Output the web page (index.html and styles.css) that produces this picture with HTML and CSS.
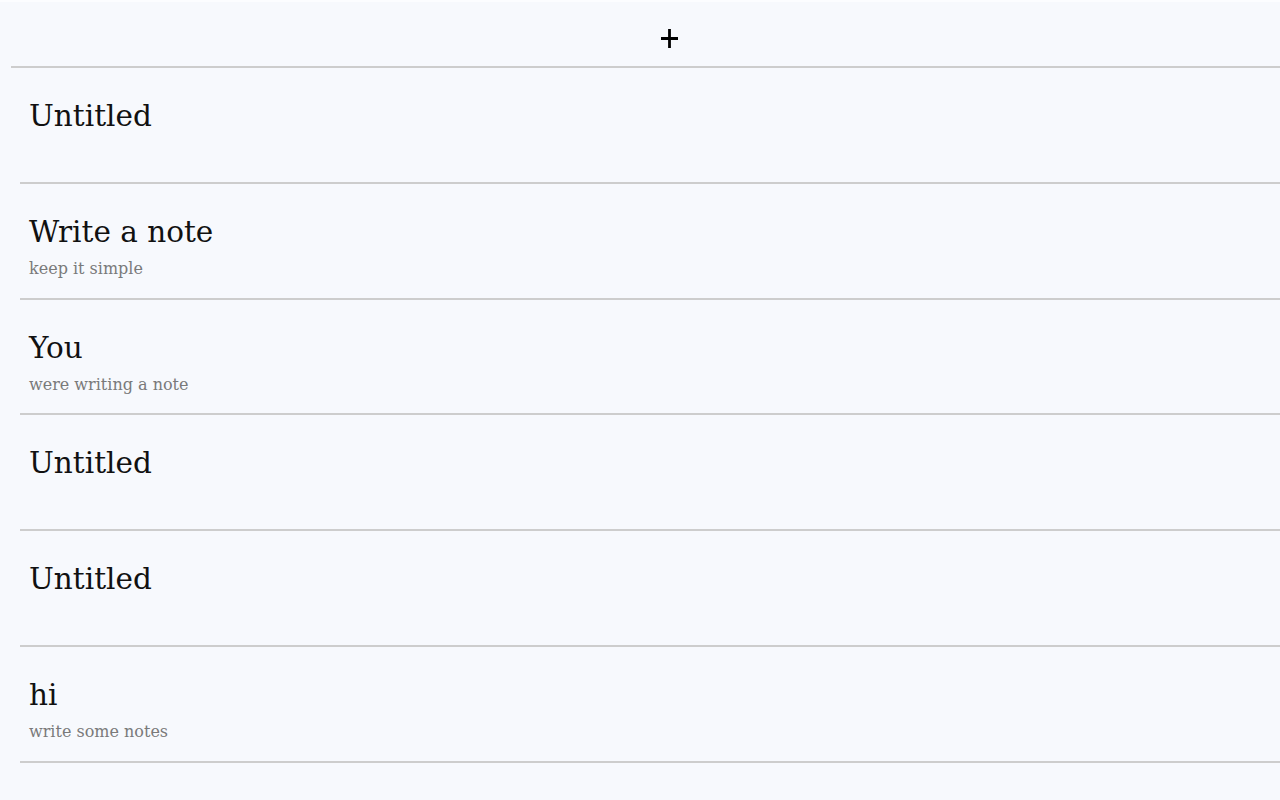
FILE: index.html
```html
<!DOCTYPE html>
<html>
<head>
<meta charset="utf-8">
<link rel="stylesheet" href="styles.css">
</head>
<body>
<div class="app">
  <header class="topbar">
    <button class="add" aria-label="New note">
      <svg width="17" height="19" viewBox="0 0 17 19"><path d="M8.5 0v19M0 9.5h17" stroke="#000" stroke-width="2.8" fill="none"/></svg>
    </button>
  </header>
  <ul class="notes">
    <li class="note"><div class="title">Untitled</div><div class="sub"></div></li>
    <li class="note"><div class="title">Write a note</div><div class="sub">keep it simple</div></li>
    <li class="note"><div class="title">You</div><div class="sub">were writing a note</div></li>
    <li class="note"><div class="title">Untitled</div><div class="sub"></div></li>
    <li class="note"><div class="title">Untitled</div><div class="sub"></div></li>
    <li class="note"><div class="title">hi</div><div class="sub">write some notes</div></li>
  </ul>
</div>
</body>
</html>
```
FILE: styles.css
```css
html, body {
  margin: 0;
  padding: 0;
  background: #f7f9fd;
  height: 100%;
}
body {
  font-family: "DejaVu Serif", "Liberation Serif", serif;
  color: #111;
  border-top: 2px solid #fcfdff;
  box-sizing: border-box;
  overflow: hidden;
}
.topbar {
  margin-left: 11px;
  height: 64px;
  border-bottom: 2px solid #cdcdcd;
  display: flex;
  align-items: flex-start;
  padding-left: 650px;
}
.add {
  border: 0;
  background: transparent;
  padding: 0;
  margin-top: 27px;
  width: 17px;
  height: 19px;
  display: flex;
}
.notes {
  list-style: none;
  margin: 0;
  padding: 0;
}
.note {
  margin-left: 20px;
  height: 115.8px;
  border-bottom: 2px solid #cdcdcd;
  padding: 29px 0 0 9px;
  box-sizing: border-box;
}
.title {
  font-size: 29.5px;
  line-height: 38px;
  color: #111;
}
.sub {
  margin-top: 7px;
  font-size: 16px;
  line-height: 22px;
  color: #7a7a7a;
}
```
